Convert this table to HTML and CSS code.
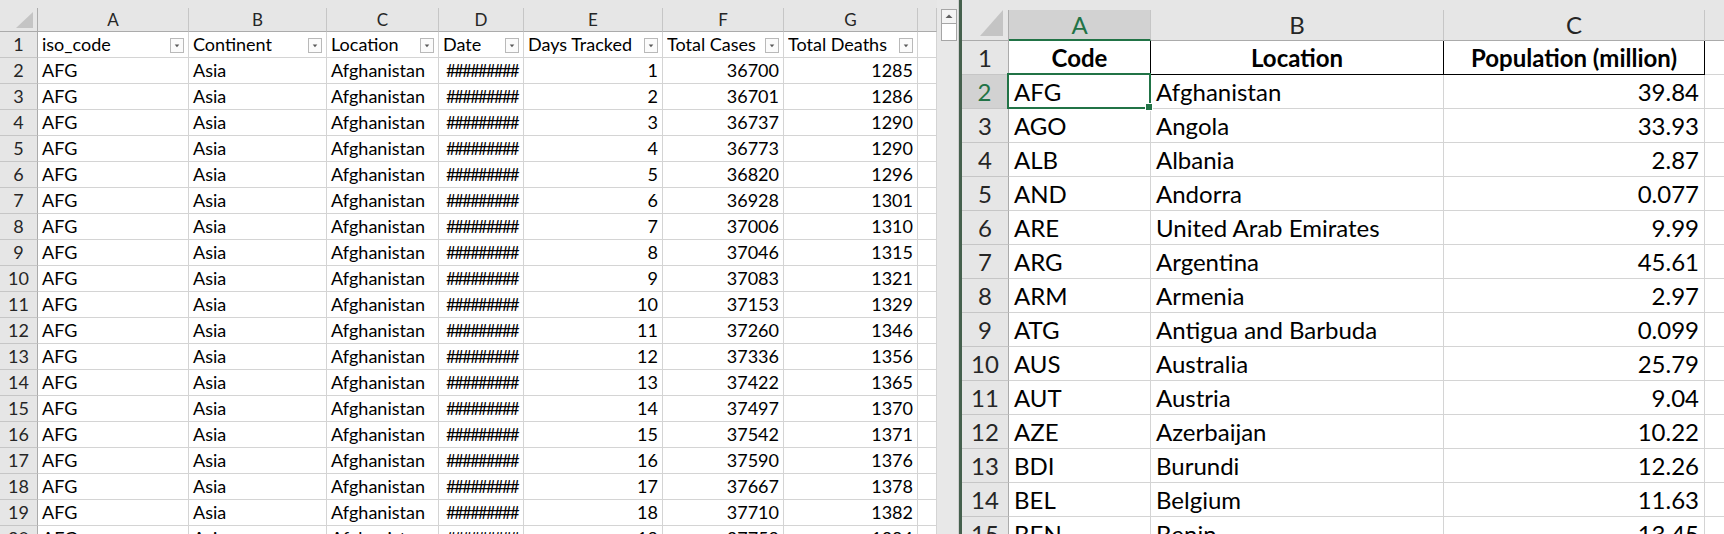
FILE: index.html
```html
<!DOCTYPE html>
<html>
<head>
<meta charset="utf-8">
<link rel="stylesheet" href="styles.css">
</head>
<body>
<div class="app">
  <section class="win-l">
    <div class="sheet-l">
      <div class="band band-l"></div>
      <div class="grid grid-l">
        <div class="corner"><span class="tri"></span></div>
        <div class="hd">A</div><div class="hd">B</div><div class="hd">C</div><div class="hd">D</div><div class="hd">E</div><div class="hd">F</div><div class="hd">G</div><div class="hd"></div>

        <div class="rh">1</div>
        <div class="c th"><span>iso_code</span><span class="flt"><svg viewBox="0 0 13 13"><path d="M4 5.5h5l-2.5 3z"/></svg></span></div>
        <div class="c th"><span>Continent</span><span class="flt"><svg viewBox="0 0 13 13"><path d="M4 5.5h5l-2.5 3z"/></svg></span></div>
        <div class="c th"><span>Location</span><span class="flt"><svg viewBox="0 0 13 13"><path d="M4 5.5h5l-2.5 3z"/></svg></span></div>
        <div class="c th"><span>Date</span><span class="flt"><svg viewBox="0 0 13 13"><path d="M4 5.5h5l-2.5 3z"/></svg></span></div>
        <div class="c th"><span>Days Tracked</span><span class="flt"><svg viewBox="0 0 13 13"><path d="M4 5.5h5l-2.5 3z"/></svg></span></div>
        <div class="c th"><span>Total Cases</span><span class="flt"><svg viewBox="0 0 13 13"><path d="M4 5.5h5l-2.5 3z"/></svg></span></div>
        <div class="c th"><span>Total Deaths</span><span class="flt"><svg viewBox="0 0 13 13"><path d="M4 5.5h5l-2.5 3z"/></svg></span></div>
        <div class="c"></div>

        <div class="rh">2</div><div class="c">AFG</div><div class="c">Asia</div><div class="c">Afghanistan</div><div class="c hash">#########</div><div class="c n">1</div><div class="c n">36700</div><div class="c n">1285</div><div class="c"></div>
        <div class="rh">3</div><div class="c">AFG</div><div class="c">Asia</div><div class="c">Afghanistan</div><div class="c hash">#########</div><div class="c n">2</div><div class="c n">36701</div><div class="c n">1286</div><div class="c"></div>
        <div class="rh">4</div><div class="c">AFG</div><div class="c">Asia</div><div class="c">Afghanistan</div><div class="c hash">#########</div><div class="c n">3</div><div class="c n">36737</div><div class="c n">1290</div><div class="c"></div>
        <div class="rh">5</div><div class="c">AFG</div><div class="c">Asia</div><div class="c">Afghanistan</div><div class="c hash">#########</div><div class="c n">4</div><div class="c n">36773</div><div class="c n">1290</div><div class="c"></div>
        <div class="rh">6</div><div class="c">AFG</div><div class="c">Asia</div><div class="c">Afghanistan</div><div class="c hash">#########</div><div class="c n">5</div><div class="c n">36820</div><div class="c n">1296</div><div class="c"></div>
        <div class="rh">7</div><div class="c">AFG</div><div class="c">Asia</div><div class="c">Afghanistan</div><div class="c hash">#########</div><div class="c n">6</div><div class="c n">36928</div><div class="c n">1301</div><div class="c"></div>
        <div class="rh">8</div><div class="c">AFG</div><div class="c">Asia</div><div class="c">Afghanistan</div><div class="c hash">#########</div><div class="c n">7</div><div class="c n">37006</div><div class="c n">1310</div><div class="c"></div>
        <div class="rh">9</div><div class="c">AFG</div><div class="c">Asia</div><div class="c">Afghanistan</div><div class="c hash">#########</div><div class="c n">8</div><div class="c n">37046</div><div class="c n">1315</div><div class="c"></div>
        <div class="rh">10</div><div class="c">AFG</div><div class="c">Asia</div><div class="c">Afghanistan</div><div class="c hash">#########</div><div class="c n">9</div><div class="c n">37083</div><div class="c n">1321</div><div class="c"></div>
        <div class="rh">11</div><div class="c">AFG</div><div class="c">Asia</div><div class="c">Afghanistan</div><div class="c hash">#########</div><div class="c n">10</div><div class="c n">37153</div><div class="c n">1329</div><div class="c"></div>
        <div class="rh">12</div><div class="c">AFG</div><div class="c">Asia</div><div class="c">Afghanistan</div><div class="c hash">#########</div><div class="c n">11</div><div class="c n">37260</div><div class="c n">1346</div><div class="c"></div>
        <div class="rh">13</div><div class="c">AFG</div><div class="c">Asia</div><div class="c">Afghanistan</div><div class="c hash">#########</div><div class="c n">12</div><div class="c n">37336</div><div class="c n">1356</div><div class="c"></div>
        <div class="rh">14</div><div class="c">AFG</div><div class="c">Asia</div><div class="c">Afghanistan</div><div class="c hash">#########</div><div class="c n">13</div><div class="c n">37422</div><div class="c n">1365</div><div class="c"></div>
        <div class="rh">15</div><div class="c">AFG</div><div class="c">Asia</div><div class="c">Afghanistan</div><div class="c hash">#########</div><div class="c n">14</div><div class="c n">37497</div><div class="c n">1370</div><div class="c"></div>
        <div class="rh">16</div><div class="c">AFG</div><div class="c">Asia</div><div class="c">Afghanistan</div><div class="c hash">#########</div><div class="c n">15</div><div class="c n">37542</div><div class="c n">1371</div><div class="c"></div>
        <div class="rh">17</div><div class="c">AFG</div><div class="c">Asia</div><div class="c">Afghanistan</div><div class="c hash">#########</div><div class="c n">16</div><div class="c n">37590</div><div class="c n">1376</div><div class="c"></div>
        <div class="rh">18</div><div class="c">AFG</div><div class="c">Asia</div><div class="c">Afghanistan</div><div class="c hash">#########</div><div class="c n">17</div><div class="c n">37667</div><div class="c n">1378</div><div class="c"></div>
        <div class="rh">19</div><div class="c">AFG</div><div class="c">Asia</div><div class="c">Afghanistan</div><div class="c hash">#########</div><div class="c n">18</div><div class="c n">37710</div><div class="c n">1382</div><div class="c"></div>
        <div class="rh">20</div><div class="c">AFG</div><div class="c">Asia</div><div class="c">Afghanistan</div><div class="c hash">#########</div><div class="c n">19</div><div class="c n">37759</div><div class="c n">1384</div><div class="c"></div>
      </div>
    </div>
    <div class="vscroll">
      <div class="vs-btn"><svg viewBox="0 0 14 13"><path d="M3.5 8h7L7 4.5z"/></svg></div>
      <div class="vs-thumb"></div>
    </div>
  </section>
  <div class="divider"></div>
  <section class="win-r">
    <div class="band band-r"></div>
    <div class="grid grid-r">
      <div class="corner"><span class="tri"></span></div>
      <div class="hd sel">A</div><div class="hd">B</div><div class="hd">C</div><div class="hd"></div>

      <div class="rh">1</div><div class="c b">Code</div><div class="c b">Location</div><div class="c b">Population (million)</div><div class="c"></div>
      <div class="rh sel">2</div><div class="c active">AFG</div><div class="c">Afghanistan</div><div class="c n">39.84</div><div class="c"></div>
      <div class="rh">3</div><div class="c">AGO</div><div class="c">Angola</div><div class="c n">33.93</div><div class="c"></div>
      <div class="rh">4</div><div class="c">ALB</div><div class="c">Albania</div><div class="c n">2.87</div><div class="c"></div>
      <div class="rh">5</div><div class="c">AND</div><div class="c">Andorra</div><div class="c n">0.077</div><div class="c"></div>
      <div class="rh">6</div><div class="c">ARE</div><div class="c">United Arab Emirates</div><div class="c n">9.99</div><div class="c"></div>
      <div class="rh">7</div><div class="c">ARG</div><div class="c">Argentina</div><div class="c n">45.61</div><div class="c"></div>
      <div class="rh">8</div><div class="c">ARM</div><div class="c">Armenia</div><div class="c n">2.97</div><div class="c"></div>
      <div class="rh">9</div><div class="c">ATG</div><div class="c">Antigua and Barbuda</div><div class="c n">0.099</div><div class="c"></div>
      <div class="rh">10</div><div class="c">AUS</div><div class="c">Australia</div><div class="c n">25.79</div><div class="c"></div>
      <div class="rh">11</div><div class="c">AUT</div><div class="c">Austria</div><div class="c n">9.04</div><div class="c"></div>
      <div class="rh">12</div><div class="c">AZE</div><div class="c">Azerbaijan</div><div class="c n">10.22</div><div class="c"></div>
      <div class="rh">13</div><div class="c">BDI</div><div class="c">Burundi</div><div class="c n">12.26</div><div class="c"></div>
      <div class="rh">14</div><div class="c">BEL</div><div class="c">Belgium</div><div class="c n">11.63</div><div class="c"></div>
      <div class="rh">15</div><div class="c">BEN</div><div class="c">Benin</div><div class="c n">13.45</div><div class="c"></div>
    </div>
  </section>
</div>
</body>
</html>
```

FILE: styles.css
```css
* { box-sizing: border-box; }
html, body { margin: 0; padding: 0; }
body {
  width: 1724px;
  height: 534px;
  overflow: hidden;
  background: #e6e6e6;
  font-family: Lato, "Liberation Sans", sans-serif;
  color: #000;
}
.app { display: flex; height: 534px; overflow: hidden; }

/* left window */
.win-l { display: flex; width: 959px; flex: none; height: 534px; }
.sheet-l {
  width: 937px; flex: none; display: flex; flex-direction: column; overflow: hidden;
  box-shadow: inset 1px 0 0 #9d9d9d;
}
.band { flex: none; background: #e6e6e6; }
.band-l { height: 8px; }
.band-r { height: 10px; }

.grid { display: grid; }
.grid-l {
  grid-template-columns: 38px 151px 138px 112px 85px 139px 121px 134px 19px;
  grid-template-rows: 24px;
  grid-auto-rows: 26px;
  font-size: 18px;
  line-height: 25px;
}
.grid-r {
  grid-template-columns: 47px 142px 293px 261px 20px;
  grid-template-rows: 31px;
  grid-auto-rows: 34px;
  font-size: 24px;
  line-height: 33px;
}

.corner {
  background: #e6e6e6;
  border-right: 1px solid #ababab;
  border-bottom: 1px solid #ababab;
  position: relative;
}
.tri {
  position: absolute;
  background: #c4c4c4;
  clip-path: polygon(100% 0, 100% 100%, 0 100%);
}
.grid-l .tri { left: 16px; top: 4px; width: 17px; height: 16px; }
.grid-r .tri { left: 18px; top: 0; width: 23px; height: 26px; }

.hd {
  background: #e6e6e6;
  border-right: 1px solid #c6c6c6;
  border-bottom: 1px solid #ababab;
  text-align: center;
  color: #262626;
  white-space: nowrap;
  overflow: hidden;
}
.grid-l .hd { line-height: 23px; font-size: 17px; }
.grid-r .hd { line-height: 30px; }
.hd.sel {
  background: #d2d2d2;
  color: #217346;
  border-bottom: 2px solid #217346;
}

.rh {
  background: #e6e6e6;
  border-right: 1px solid #ababab;
  border-bottom: 1px solid #c6c6c6;
  text-align: center;
  color: #262626;
  white-space: nowrap;
}
.rh.sel {
  background: #d2d2d2;
  color: #217346;
  border-right: 2px solid #217346;
}

.c {
  background: #fff;
  border-right: 1px solid #d4d4d4;
  border-bottom: 1px solid #d4d4d4;
  white-space: nowrap;
  overflow: hidden;
}
.grid-l .c { padding: 0 4px; }
.grid-r .c { padding: 0 5px 0 5px; }
.n { text-align: right; }
.grid-l .hash { font-size: 17px; letter-spacing: -1.9px; padding-left: 7px; padding-right: 0; }

.th { display: flex; justify-content: space-between; align-items: center; padding-right: 4px; }
.th span:first-child { overflow: hidden; }
.flt {
  flex: none;
  width: 14px; height: 15px;
  margin-top: 2px;
  border: 1px solid #b9b9b9;
  background: #fbfbfb;
  display: flex;
}
.flt svg { width: 12px; height: 13px; fill: #595959; }

.b { font-weight: 700; text-align: center; }
.grid-r .b { border-bottom: 1px solid #000; border-right: 1px solid #000; }

.active { position: relative; overflow: visible; }
.active::after {
  content: "";
  position: absolute;
  left: -2px; top: -2px; right: -1px; bottom: -1px;
  border: 2px solid #217346;
}
.active::before {
  content: "";
  position: absolute;
  right: -3px; bottom: -3px;
  width: 6px; height: 6px;
  background: #217346;
  border: 1px solid #fff;
  z-index: 2;
}

/* scrollbar */
.vscroll {
  width: 22px; flex: none;
  background: #e8e8e8;
  padding: 9px 0 0 4px;
  display: flex; flex-direction: column;
  border-right: 1px solid #d0d0d0;
}
.vs-btn {
  width: 16px; height: 15px;
  border: 1px solid #a6a6a6;
  background: #f4f4f4;
  display: flex;
}
.vs-btn svg { width: 14px; height: 13px; fill: #606060; }
.vs-thumb {
  width: 16px; height: 17px;
  border: 1px solid #a6a6a6; border-top: none;
  background: #fff;
}

.divider { width: 3px; flex: none; background: #45604d; }

/* right window */
.win-r { flex: 1; display: flex; flex-direction: column; overflow: hidden; min-width: 0; }
```
